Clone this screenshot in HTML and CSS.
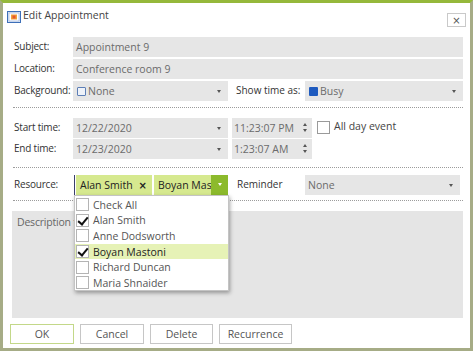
FILE: index.html
```html
<!DOCTYPE html>
<html lang="en">

<head>
  <meta charset="UTF-8">
  <title>Edit Appointment</title>
  <link rel="stylesheet" href="styles.css">
</head>

<body>
  <div class="window">
    <div class="titlebar">
      <svg class="app-icon" width="14" height="12" viewBox="0 0 14 12">
        <rect x="0.5" y="0.5" width="13" height="11" fill="#dfe8f6" stroke="#3d6fb8"/>
        <rect x="2" y="2" width="10" height="8" fill="#fff" stroke="#8fa9d6" stroke-width="0.6"/>
        <rect x="4" y="3.5" width="6" height="5" fill="#f2a23a"/>
        <rect x="5.5" y="4.5" width="3" height="3" fill="#e4572e"/>
      </svg>
      <span class="title">Edit Appointment</span>
      <button class="close">&#215;</button>
    </div>

    <div class="content">
      <div class="row">
        <span class="lbl">Subject:</span>
        <div class="field grow">Appointment 9</div>
      </div>
      <div class="row">
        <span class="lbl">Location:</span>
        <div class="field grow">Conference room 9</div>
      </div>
      <div class="row">
        <span class="lbl">Background:</span>
        <div class="field select w155">
          <span class="swatch swatch-none"></span>None
          <span class="arrow"></span>
        </div>
        <span class="lbl2">Show time as:</span>
        <div class="field select grow">
          <span class="swatch swatch-busy"></span>Busy
          <span class="arrow"></span>
        </div>
      </div>

      <div class="sep sep-1"></div>

      <div class="row">
        <span class="lbl">Start time:</span>
        <div class="field select w155">12/22/2020<span class="arrow"></span></div>
        <div class="field time">11:23:07 PM<span class="spin"><i class="up"></i><i class="down"></i></span></div>
        <span class="check"></span>
        <span class="allday">All day event</span>
      </div>
      <div class="row row-end">
        <span class="lbl">End time:</span>
        <div class="field select w155">12/23/2020<span class="arrow"></span></div>
        <div class="field time">1:23:07 AM<span class="spin"><i class="up"></i><i class="down"></i></span></div>
      </div>

      <div class="sep sep-2"></div>

      <div class="row">
        <span class="lbl">Resource:</span>
        <div class="multi">
          <span class="chip">Alan Smith<b class="chip-x">&#215;</b></span>
          <span class="chip chip-cut">Boyan Mastoni</span>
          <span class="toggle"><span class="arrow arrow-white"></span></span>

          <div class="popup">
            <div class="item"><span class="cb"></span>Check All</div>
            <div class="item"><span class="cb on"></span>Alan Smith</div>
            <div class="item"><span class="cb"></span>Anne Dodsworth</div>
            <div class="item active"><span class="cb on"></span>Boyan Mastoni</div>
            <div class="item"><span class="cb"></span>Richard Duncan</div>
            <div class="item"><span class="cb"></span>Maria Shnaider</div>
          </div>
        </div>
        <span class="lbl2 lbl-rem">Reminder</span>
        <div class="field select grow rem">None<span class="arrow"></span></div>
      </div>

      <div class="sep sep-3"></div>

      <div class="desc">Description field</div>

      <div class="buttons">
        <button class="btn btn-ok">OK</button>
        <button class="btn">Cancel</button>
        <button class="btn btn-del">Delete</button>
        <button class="btn btn-rec">Recurrence</button>
      </div>
    </div>
  </div>
</body>

</html>
```

FILE: styles.css
```css
body {
  margin: 0;
  background: #fff;
  font-family: "Open Sans", "Noto Sans", sans-serif;
  font-size: 10px;
  color: #333;
}

.window {
  width: 473px;
  height: 351px;
  box-sizing: border-box;
  border: 3px solid #a6ac86;
  border-top-color: #95b83b;
  background: #fff;
  display: flex;
  flex-direction: column;
}

.titlebar {
  height: 26px;
  display: flex;
  align-items: flex-start;
  padding-left: 4px;
}

.app-icon {
  margin-top: 8px;
  flex: none;
}

.title {
  margin-left: 2px;
  margin-top: 5px;
  color: #444;
  font-size: 10.5px;
}

.close {
  margin-left: auto;
  margin-right: 4px;
  margin-top: 10px;
  width: 19px;
  height: 14px;
  padding: 0;
  border: 1px solid #c9c9c9;
  background: #fff;
  color: #555;
  font-family: "DejaVu Sans", sans-serif;
  font-size: 10px;
  line-height: 11px;
}

.content {
  flex: 1;
  padding: 8px 7px 0 9px;
  display: flex;
  flex-direction: column;
}

.row {
  display: flex;
  align-items: center;
  height: 20px;
  margin-bottom: 2px;
}

.row-end {
  margin-top: -1px;
}

.lbl {
  width: 59px;
  padding-left: 2px;
  flex: none;
  margin-top: -3px;
  letter-spacing: -0.2px;
}

.lbl2 {
  width: 69px;
  margin-left: 8px;
  flex: none;
  margin-top: -2px;
}

.lbl-rem {
  margin-left: 9px;
  width: 68px;
}

.field {
  height: 20px;
  box-sizing: border-box;
  background: #e6e6e6;
  color: #6b6b6b;
  font-size: 10.5px;
  padding-left: 3px;
  display: flex;
  align-items: center;
  position: relative;
}

.grow {
  flex: 1;
}

.w155 {
  width: 155px;
  flex: none;
}

.rem {
  margin-right: 3px;
}

.arrow {
  position: absolute;
  right: 7px;
  top: 9px;
  width: 0;
  height: 0;
  border-left: 2.5px solid transparent;
  border-right: 2.5px solid transparent;
  border-top: 3px solid #555;
}

.arrow-white {
  right: 6px;
  top: 8px;
  border-top-color: #fff;
}

.swatch {
  width: 9px;
  height: 9px;
  box-sizing: border-box;
  margin-right: 2px;
  border-radius: 1px;
  flex: none;
}

.swatch-none {
  border: 1px solid #5d7fb6;
  background: #eef2f9;
  margin-left: 1px;
}

.swatch-busy {
  background: #1f5bbf;
  margin-left: 1px;
}

.time {
  width: 80px;
  margin-left: 4px;
  flex: none;
  padding-left: 2px;
}

.spin {
  position: absolute;
  right: 5px;
  top: 5px;
  display: flex;
  flex-direction: column;
  gap: 3px;
}

.spin i {
  width: 0;
  height: 0;
  border-left: 2px solid transparent;
  border-right: 2px solid transparent;
}

.spin .up {
  border-bottom: 3px solid #555;
}

.spin .down {
  border-top: 3px solid #555;
}

.check {
  width: 13px;
  height: 13px;
  box-sizing: border-box;
  border: 1px solid #9a9a9a;
  background: #fff;
  margin-left: 5px;
  margin-top: -2px;
  flex: none;
}

.allday {
  margin-left: 4px;
  margin-top: -4px;
  font-size: 10.5px;
  color: #444;
}

.sep {
  height: 0;
  border-top: 1px dotted #9c9c9c;
  margin-left: 1px;
}

.sep-1 {
  margin-top: 4px;
  margin-bottom: 10px;
}

.sep-2 {
  margin-top: 6px;
  margin-bottom: 7px;
}

.sep-3 {
  margin-top: 3px;
  margin-bottom: 10px;
}

.multi {
  height: 20px;
  flex: none;
  display: flex;
  position: relative;
  box-sizing: border-box;
  border-left: 1px solid #3b3f6e;
  margin-left: 1px;
  width: 154px;
  font-size: 10.5px;
}

.chip {
  background: #d6e98f;
  color: #222;
  display: flex;
  align-items: center;
  padding-left: 4px;
  white-space: nowrap;
  overflow: hidden;
}

.chip:first-child {
  width: 72px;
  flex: none;
  margin-left: 1px;
}

.chip-x {
  margin-left: auto;
  margin-right: 5px;
  font-family: "DejaVu Sans", sans-serif;
  font-size: 10px;
}

.chip-cut {
  margin-left: 2px;
  flex: 1;
  padding-left: 4px;
}

.toggle {
  width: 17px;
  flex: none;
  background: #8cba2c;
  position: relative;
}

.popup {
  position: absolute;
  top: 20px;
  left: -1px;
  width: 155px;
  height: 96px;
  box-sizing: border-box;
  background: #fff;
  border: 1px solid #c4c4c4;
  box-shadow: 1px 2px 4px rgba(0, 0, 0, 0.35);
  padding-top: 1px;
  z-index: 5;
}

.item {
  height: 15.6px;
  display: flex;
  align-items: center;
  color: #555;
  font-size: 10.5px;
}

.item.active {
  background: #e6f2b6;
  color: #222;
}

.cb {
  width: 13px;
  height: 13px;
  box-sizing: border-box;
  border: 1px solid #b4b4b4;
  background: #fff;
  margin-left: 1px;
  margin-right: 4px;
  position: relative;
}

.cb.on::after {
  content: "";
  position: absolute;
  left: 3px;
  top: 0;
  width: 4px;
  height: 8px;
  border-right: 2px solid #111;
  border-bottom: 2px solid #111;
  transform: rotate(40deg);
}

.desc {
  height: 107px;
  background: #e5e5e5;
  color: #666;
  font-size: 10.5px;
  letter-spacing: -0.2px;
  padding: 4px 5px;
  box-sizing: border-box;
}

.buttons {
  display: flex;
  gap: 6px;
  margin-top: 6px;
  margin-left: -2px;
}

.btn {
  width: 64px;
  height: 20px;
  padding: 0;
  background: #fff;
  border: 1px solid #c6c6c6;
  color: #555;
  font-family: "Open Sans", "Noto Sans", sans-serif;
  font-size: 10.5px;
}

.btn-ok {
  border-color: #c3d889;
}

.btn-del {
  width: 63px;
}

.btn-rec {
  width: 73px;
}
```
